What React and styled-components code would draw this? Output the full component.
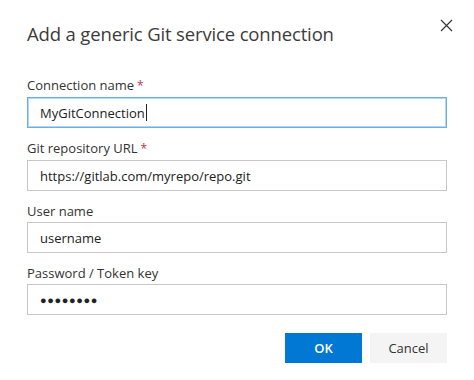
import React from 'react';
import styled, { createGlobalStyle } from 'styled-components';

const GlobalStyle = createGlobalStyle`
  html, body {
    margin: 0;
    padding: 0;
    background: #ffffff;
  }
  body {
    font-family: "Open Sans", "Noto Sans", sans-serif;
    color: #333333;
  }
`;

const Dialog = styled.div`
  width: 474px;
  height: 380px;
  box-sizing: border-box;
  padding: 20px 27px 0 27px;
  display: flex;
  flex-direction: column;
  position: relative;
  background: #ffffff;
`;

const Header = styled.div`
  display: flex;
  justify-content: space-between;
  align-items: flex-start;
  height: 28px;
  margin-bottom: 27px;
`;

const Title = styled.h1`
  margin: 0;
  font-size: 18.5px;
  font-weight: 400;
  line-height: 28px;
  color: #3c3c3c;
  letter-spacing: -0.15px;
`;

const CloseButton = styled.button`
  position: absolute;
  top: 17px;
  right: 20px;
  width: 16px;
  height: 16px;
  padding: 0;
  border: none;
  background: transparent;
  display: flex;
  align-items: center;
  justify-content: center;
  cursor: pointer;
`;

const Form = styled.div`
  display: flex;
  flex-direction: column;
  gap: 10px;
`;

const Field = styled.div`
  display: flex;
  flex-direction: column;
`;

const Label = styled.label`
  font-size: 13px;
  line-height: 20px;
  margin-bottom: 1px;
  color: #333333;
`;

const Required = styled.span`
  color: #c4314b;
  margin-left: 3px;
  font-size: 12px;
`;

const Input = styled.div`
  box-sizing: border-box;
  height: 31px;
  width: 420px;
  border: 1px solid ${p => (p.$focused ? '#6aaee6' : '#c8c8c8')};
  ${p => p.$focused && 'box-shadow: 0 0 0 1px #b3d6f2 inset;'}
  padding: 0 12px;
  display: flex;
  align-items: center;
  font-size: 13px;
  color: #222222;
`;

const Caret = styled.span`
  display: inline-block;
  width: 1px;
  height: 17px;
  background: #222222;
  margin-left: 1px;
`;

const Footer = styled.div`
  display: flex;
  justify-content: flex-end;
  gap: 8px;
  margin-top: 18px;
`;

const Button = styled.button`
  width: 77px;
  height: 30px;
  border: none;
  font-family: inherit;
  font-size: 13px;
  font-weight: ${p => (p.$primary ? 600 : 400)};
  background: ${p => (p.$primary ? '#0078d4' : '#f4f4f4')};
  color: ${p => (p.$primary ? '#ffffff' : '#333333')};
  cursor: pointer;
`;

const Dots = styled.span`
  font-size: 11px;
  letter-spacing: 0.6px;
  color: #222222;
`;

export default function App() {
  return (
    <>
      <GlobalStyle />
      <Dialog>
        <Header>
          <Title>Add a generic Git service connection</Title>
        </Header>
        <CloseButton aria-label="Close">
          <svg width="13" height="13" viewBox="0 0 13 13">
            <path d="M1 1 L12 12 M12 1 L1 12" stroke="#333" strokeWidth="1.1" fill="none" />
          </svg>
        </CloseButton>
        <Form>
          <Field>
            <Label>
              Connection name<Required>*</Required>
            </Label>
            <Input $focused>
              MyGitConnection
              <Caret />
            </Input>
          </Field>
          <Field>
            <Label>
              Git repository URL<Required>*</Required>
            </Label>
            <Input>https://gitlab.com/myrepo/repo.git</Input>
          </Field>
          <Field>
            <Label>User name</Label>
            <Input>username</Input>
          </Field>
          <Field>
            <Label>Password / Token key</Label>
            <Input>
              <Dots>●●●●●●●●</Dots>
            </Input>
          </Field>
        </Form>
        <Footer>
          <Button $primary>OK</Button>
          <Button>Cancel</Button>
        </Footer>
      </Dialog>
    </>
  );
}
